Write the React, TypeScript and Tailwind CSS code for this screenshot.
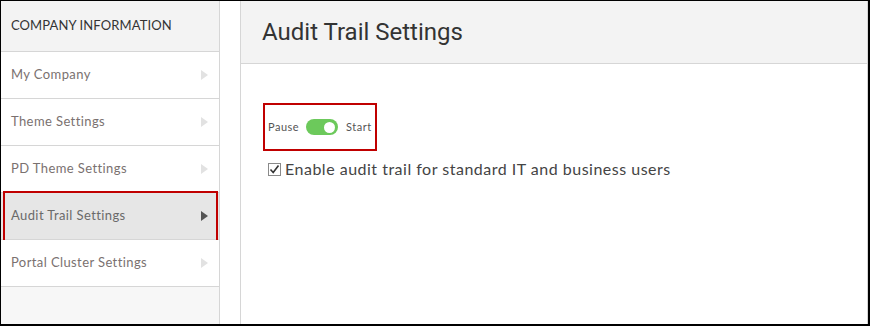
import React from "react";

const items = [
  { label: "My Company", active: false },
  { label: "Theme Settings", active: false },
  { label: "PD Theme Settings", active: false },
  { label: "Audit Trail Settings", active: true },
  { label: "Portal Cluster Settings", active: false },
];

function Arrow({ active }: { active: boolean }) {
  return (
    <svg width="7" height="10" viewBox="0 0 7 10" className="shrink-0">
      <polygon points="0,0 7,5 0,10" fill={active ? "#555555" : "#e2e2e2"} />
    </svg>
  );
}

export default function App() {
  const body = { fontFamily: "Lato, 'Open Sans', sans-serif" };
  return (
    <div
      className="w-[870px] h-[326px] bg-white border-t border-l border-r-2 border-b-2 border-black flex"
      style={body}
    >
      <aside className="w-[219px] shrink-0 border-r border-[#d6d6d6] bg-[#f7f7f7] flex flex-col">
        <div className="h-[51px] bg-[#f3f3f3] border-b border-[#d6d6d6] flex items-center pl-[10px] text-[13px] text-[#333] tracking-[0.1px]">
          COMPANY INFORMATION
        </div>
        {items.map((it) => (
          <div
            key={it.label}
            className={
              "relative h-[47px] border-b border-[#d6d6d6] flex items-center justify-between pl-[10px] pr-[11px] text-[13px] tracking-[0.4px] " +
              (it.active ? "bg-[#e6e6e6] text-[#6a6a6a]" : "bg-white text-[#7a7170]")
            }
          >
            <span>{it.label}</span>
            <Arrow active={it.active} />
            {it.active && (
              <span className="absolute left-[2px] right-[1px] top-[-2px] bottom-[-3px] border-2 border-[#c00000] pointer-events-none" />
            )}
          </div>
        ))}
      </aside>
      <div className="w-[20px] shrink-0" />
      <main className="flex-1 border-l border-r border-[#d6d6d6] flex flex-col">
        <div
          className="h-[63px] bg-[#f3f3f3] border-b border-[#d6d6d6] flex items-center pl-[21px] text-[24px] text-[#333]"
          style={{ fontFamily: "Roboto, sans-serif" }}
        >
          Audit Trail Settings
        </div>
        <div className="pl-[22px] pt-[39px] flex flex-col">
          <div className="w-[114px] h-[48px] border-2 border-[#c00000] flex items-center pl-[3px] text-[11px] text-[#555] tracking-[0.5px]">
            <span>Pause</span>
            <span className="ml-[7px] w-[32px] h-[16px] rounded-full bg-[#6cc95b] flex items-center justify-end pr-[3px]">
              <span className="w-[11px] h-[11px] rounded-full bg-white" />
            </span>
            <span className="ml-[8px]">Start</span>
          </div>
          <label className="mt-[6px] ml-[5px] flex items-center gap-[4px] text-[16px] text-[#444] tracking-[0.5px]">
            <svg width="13" height="13" viewBox="0 0 13 13">
              <rect x="0.5" y="0.5" width="12" height="12" fill="white" stroke="#8a8a8a" />
              <polyline points="2.5,6.5 5.2,9.5 10.5,2.5" fill="none" stroke="#333" strokeWidth="1.6" />
            </svg>
            <span>Enable audit trail for standard IT and business users</span>
          </label>
        </div>
      </main>
    </div>
  );
}
